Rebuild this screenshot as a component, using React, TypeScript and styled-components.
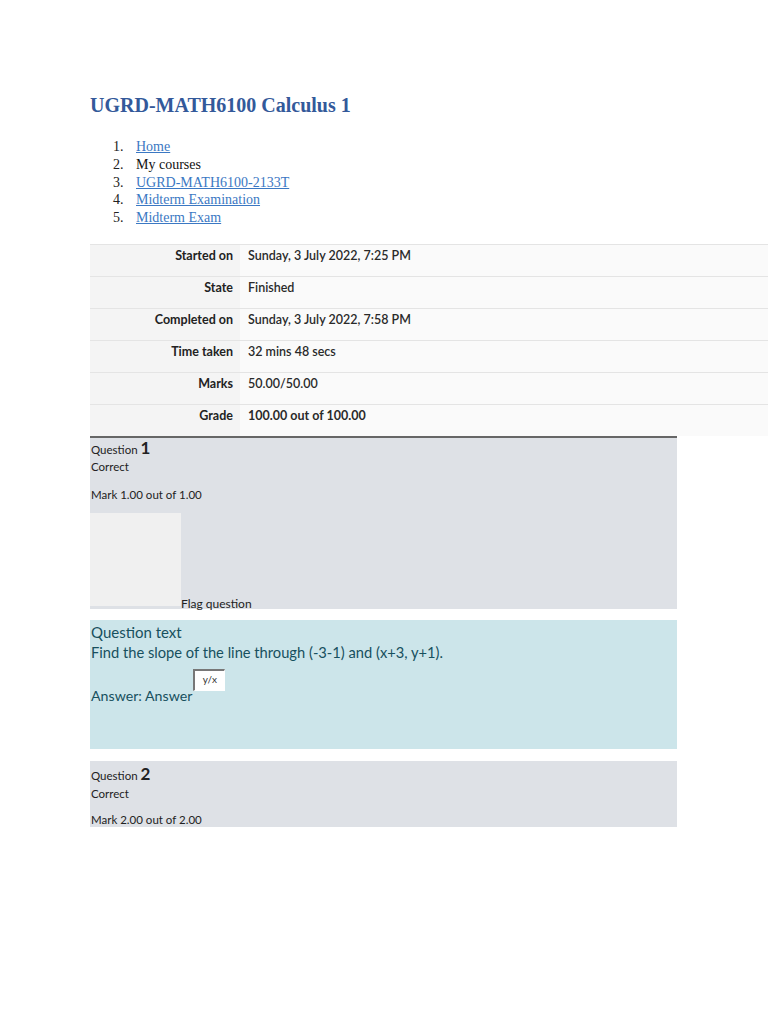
import React from "react";
import styled, { createGlobalStyle } from "styled-components";

const Global = createGlobalStyle`
  html, body { margin: 0; padding: 0; background: #ffffff; }
  body { font-family: "Liberation Serif", serif; min-height: 1024px; }
`;

const Page = styled.div`
  padding: 92px 0 120px 90px;
`;

const Title = styled.h1`
  margin: 0;
  font-family: "Liberation Serif", serif;
  font-weight: bold;
  font-size: 20px;
  line-height: 26px;
  color: #33599a;
`;

const Crumbs = styled.ol`
  margin: 20px 0 0 0;
  padding: 0 0 0 23px;
  list-style: none;
  counter-reset: crumb;
  font-family: "Liberation Serif", serif;
  font-size: 14px;
  line-height: 17.8px;
  color: #111;
`;

const CrumbItem = styled.li`
  counter-increment: crumb;
  &::before {
    content: counter(crumb) ".";
    display: inline-block;
    width: 23px;
    color: #222;
  }
`;

const Crumb = styled.a`
  color: #3b78c3;
  text-decoration: underline;
`;

const Sum = styled.div`
  margin-top: 17px;
  display: grid;
  grid-template-columns: 150px 1fr;
  border-top: 1px solid #e4e4e4;
  font-family: Lato, "Open Sans", sans-serif;
  font-size: 12.5px;
  color: #222;
`;

const Th = styled.div<{ $last?: boolean }>`
  background: #f4f4f4;
  height: ${(p) => (p.$last ? 31 : 32)}px;
  border-bottom: ${(p) => (p.$last ? "0" : "1px solid #e4e4e4")};
  text-align: right;
  padding: 3px 7px 0 0;
  box-sizing: border-box;
  font-weight: bold;
`;

const Td = styled.div<{ $last?: boolean; $bold?: boolean }>`
  background: #fafafa;
  height: ${(p) => (p.$last ? 31 : 32)}px;
  border-bottom: ${(p) => (p.$last ? "0" : "1px solid #e4e4e4")};
  padding: 3px 0 0 8px;
  box-sizing: border-box;
  font-weight: ${(p) => (p.$bold ? "bold" : 600)};
  color: #2a2a2a;
`;

const Box = styled.div<{ $bg: string; $h: number; $top: number }>`
  width: 587px;
  height: ${(p) => p.$h}px;
  margin-top: ${(p) => p.$top}px;
  background: ${(p) => p.$bg};
  box-sizing: border-box;
  font-family: Lato, "Open Sans", sans-serif;
`;

const InfoBox = styled(Box)`
  border-top: 2px solid #666;
  padding: 1px 0 0 1px;
  font-size: 11.5px;
  color: #222;
`;

const InfoBox2 = styled(Box)`
  padding: 4px 0 0 1px;
  font-size: 11.5px;
  color: #222;
`;

const QNo = styled.div`
  line-height: 18px;
  b { font-size: 17px; font-weight: bold; }
`;

const Line = styled.div<{ $mt?: number }>`
  margin-top: ${(p) => p.$mt ?? 0}px;
  line-height: 15px;
`;

const FlagRow = styled.div`
  display: flex;
  align-items: flex-end;
  margin-top: 11px;
  margin-left: -1px;
`;

const FlagTile = styled.div`
  width: 91px;
  height: 93px;
  background: #f0f0f0;
`;

const FlagLabel = styled.span`
  font-size: 12px;
  line-height: 12px;
  margin-bottom: -4px;
`;

const QText = styled(Box)`
  padding: 3px 0 0 1px;
  color: #17505e;
  font-size: 14.6px;
`;

const QHead = styled.div`
  line-height: 18px;
  font-size: 15px;
`;

const QBody = styled.div`
  line-height: 22px;
  font-size: 14.7px;
`;

const AnswerRow = styled.div`
  display: flex;
  align-items: flex-end;
  margin-top: 6px;
  line-height: 16px;
  font-size: 14.2px;
`;

const AnswerInput = styled.span`
  display: inline-flex;
  justify-content: center;
  align-items: flex-start;
  width: 32px;
  height: 22px;
  box-sizing: border-box;
  border: 1px solid #fff;
  border-top: 2px solid #777;
  border-left: 2px solid #777;
  background: #fff;
  font-size: 10px;
  line-height: 12px;
  color: #333;
  padding-top: 2px;
  margin: 0 0 13px 1px;
`;

const rows: [string, string, boolean?][] = [
  ["Started on", "Sunday, 3 July 2022, 7:25 PM"],
  ["State", "Finished"],
  ["Completed on", "Sunday, 3 July 2022, 7:58 PM"],
  ["Time taken", "32 mins 48 secs"],
  ["Marks", "50.00/50.00"],
  ["Grade", "100.00 out of 100.00", true],
];

export default function App() {
  return (
    <>
      <Global />
      <Page>
        <Title>UGRD-MATH6100 Calculus 1</Title>
        <Crumbs>
          <CrumbItem><Crumb href="#">Home</Crumb></CrumbItem>
          <CrumbItem>My courses</CrumbItem>
          <CrumbItem><Crumb href="#">UGRD-MATH6100-2133T</Crumb></CrumbItem>
          <CrumbItem><Crumb href="#">Midterm Examination</Crumb></CrumbItem>
          <CrumbItem><Crumb href="#">Midterm Exam</Crumb></CrumbItem>
        </Crumbs>
        <Sum>
          {rows.map(([k, v, b], i) => (
            <React.Fragment key={k}>
              <Th $last={i === rows.length - 1}>{k}</Th>
              <Td $last={i === rows.length - 1} $bold={b}>{v}</Td>
            </React.Fragment>
          ))}
        </Sum>
        <InfoBox $bg="#dee1e6" $h={173} $top={0}>
          <QNo>Question <b>1</b></QNo>
          <Line $mt={0}>Correct</Line>
          <Line $mt={13}>Mark 1.00 out of 1.00</Line>
          <FlagRow>
            <FlagTile />
            <FlagLabel>Flag question</FlagLabel>
          </FlagRow>
        </InfoBox>
        <QText $bg="#cce5ea" $h={129} $top={11}>
          <QHead>Question text</QHead>
          <QBody>Find the slope of the line through (-3-1) and (x+3, y+1).</QBody>
          <AnswerRow>
            <span>Answer: Answer</span>
            <AnswerInput>y/x</AnswerInput>
          </AnswerRow>
        </QText>
        <InfoBox2 $bg="#dee1e6" $h={66} $top={12}>
          <QNo>Question <b>2</b></QNo>
          <Line $mt={1}>Correct</Line>
          <Line $mt={11}>Mark 2.00 out of 2.00</Line>
        </InfoBox2>
      </Page>
    </>
  );
}
